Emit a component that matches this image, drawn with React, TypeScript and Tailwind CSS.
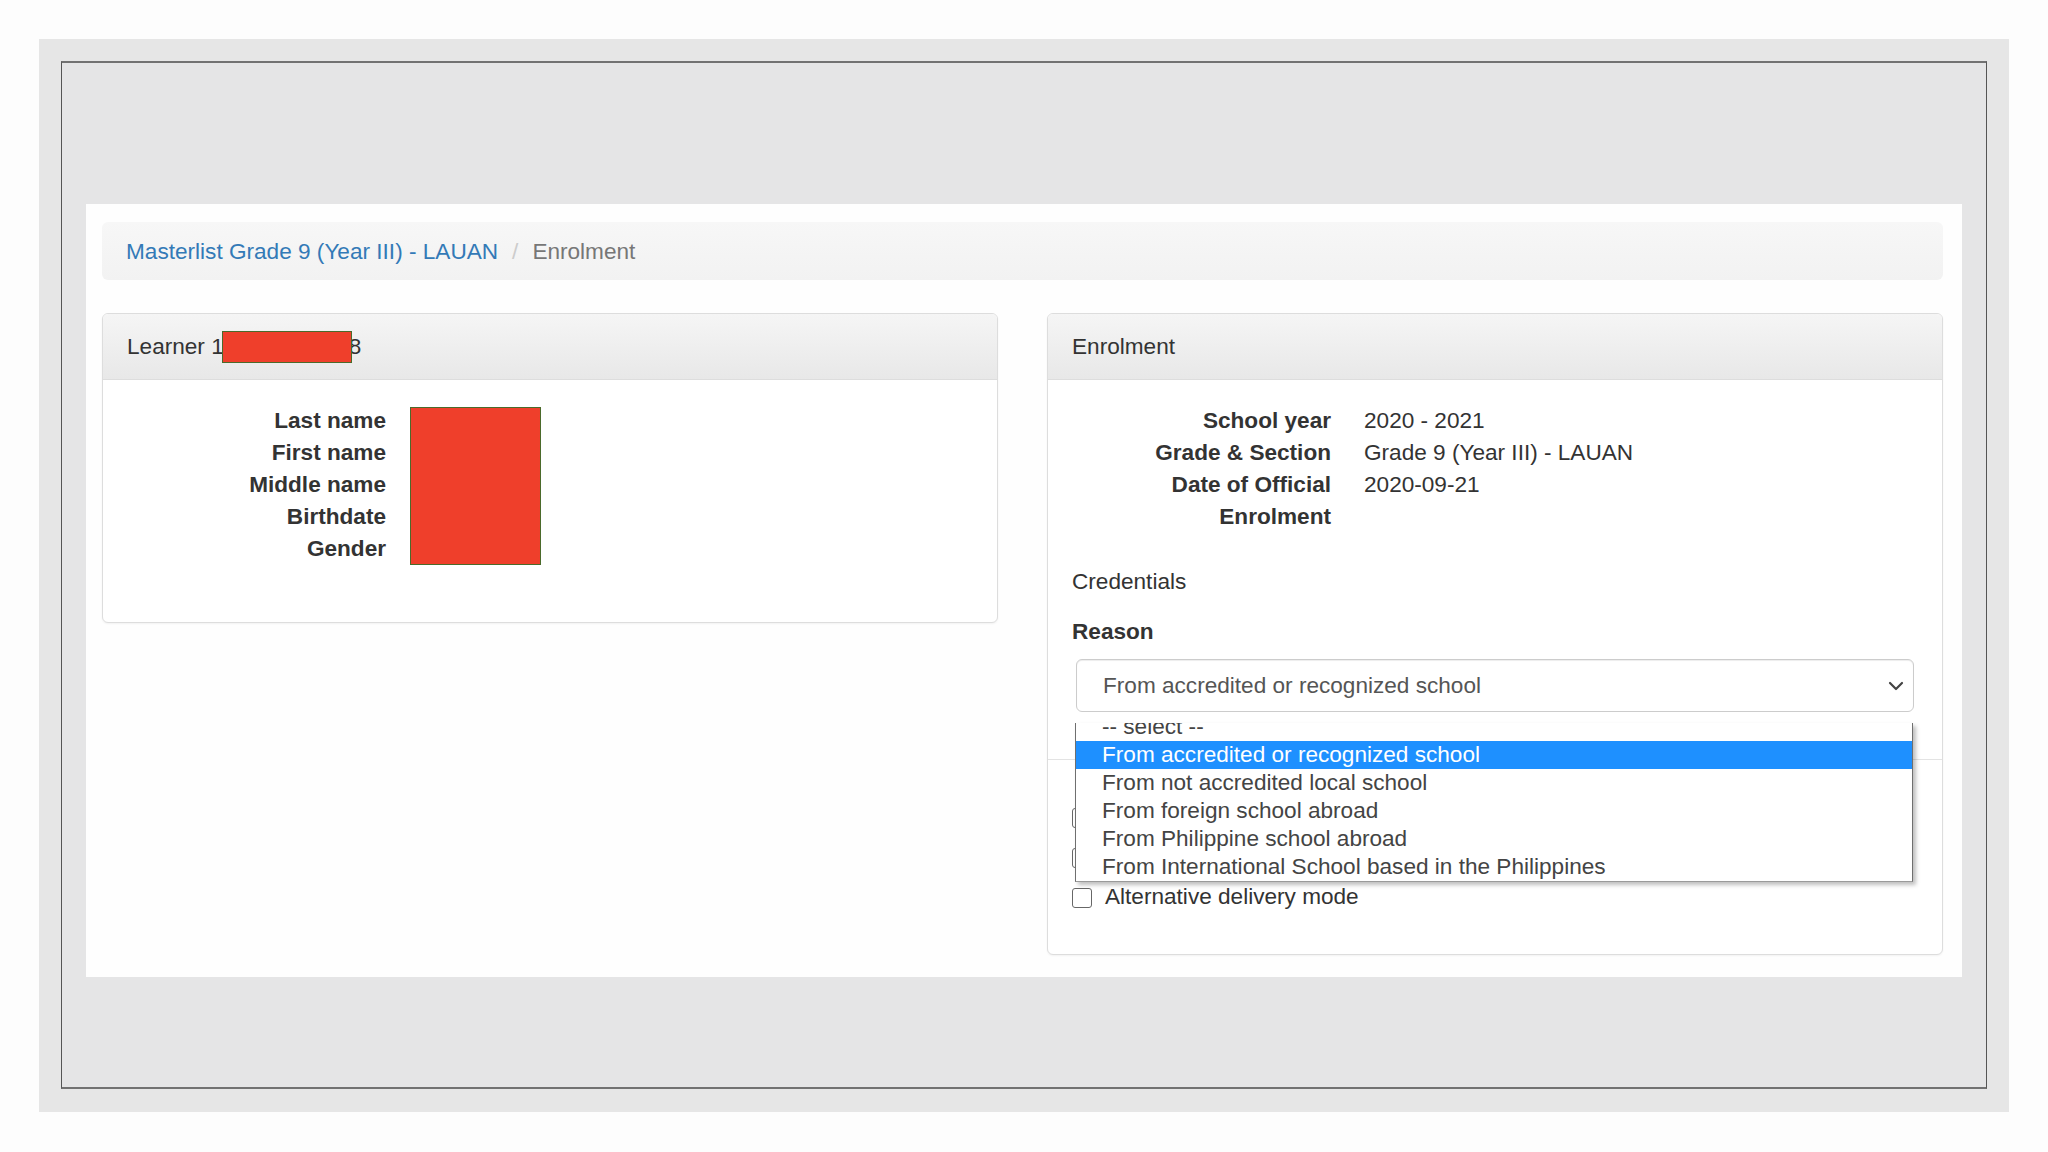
import React from "react";

function Chevron() {
  return (
    <svg width="16" height="10" viewBox="0 0 16 10" className="shrink-0">
      <path d="M2 2 L8 8 L14 2" fill="none" stroke="#444" strokeWidth="2.2" strokeLinecap="round" strokeLinejoin="round" />
    </svg>
  );
}

function Checkbox() {
  return <span className="mt-[9px] inline-block h-[20px] w-[20px] shrink-0 rounded-[3px] border-[1.5px] border-[#676767] bg-white" />;
}

const options = [
  "-- select --",
  "From accredited or recognized school",
  "From not accredited local school",
  "From foreign school abroad",
  "From Philippine school abroad",
  "From International School based in the Philippines",
];

export default function App() {
  return (
    <div className="min-h-[1152px] w-[2048px] bg-[#fdfdfd] pl-[39px] pt-[39px] font-['Liberation_Sans',Arial,sans-serif] text-[22.6px] leading-[32px] text-[#333]">
      <div className="h-[1073px] w-[1970px] bg-[#e6e6e6] p-[22px]">
        <div className="h-[1028px] border-x border-y-2 border-x-[#555] border-y-[#727272] bg-[#e5e5e6] px-[24px] pt-[141px]">
          <div className="h-[773px] bg-[#fefefe] pl-[16px] pr-[19px] pt-[18px]">
            {/* Breadcrumb */}
            <div className="mb-[33px] flex h-[58px] items-center rounded-[6px] bg-gradient-to-b from-[#f7f7f7] to-[#f2f2f2] px-[24px] pt-[2px]">
              <span className="text-[#337ab7]">Masterlist Grade 9 (Year III) - LAUAN</span>
              <span className="mx-[14px] text-[#ccc]">/</span>
              <span className="text-[#777]">Enrolment</span>
            </div>

            <div className="grid grid-cols-2 items-start gap-x-[49px]">
              {/* Learner panel */}
              <div className="rounded-[6px] border border-[#ddd] bg-white shadow-[0_1px_2px_rgba(0,0,0,0.05)]">
                <div className="flex items-center rounded-t-[5px] border-b border-[#ddd] bg-gradient-to-b from-[#f5f5f5] to-[#e8e8e8] px-[24px] pb-[16px] pt-[17px]">
                  <span>Learner 1</span>
                  <span className="relative z-10 -ml-[2px] inline-block h-[32px] w-[130px] border border-[#4b6a2b] bg-[#ef3f2b]" />
                  <span className="-ml-[3px]">8</span>
                </div>
                <div className="flex px-[24px] pb-[57px] pt-[25px]">
                  <div className="w-[259px] text-right font-bold">
                    <div>Last name</div>
                    <div>First name</div>
                    <div>Middle name</div>
                    <div>Birthdate</div>
                    <div>Gender</div>
                  </div>
                  <div className="ml-[24px] mt-[2px] h-[158px] w-[131px] border border-[#4b6a2b] bg-[#ef3f2b]" />
                </div>
              </div>

              {/* Enrolment panel */}
              <div className="rounded-[6px] border border-[#ddd] bg-white shadow-[0_1px_2px_rgba(0,0,0,0.05)]">
                <div className="rounded-t-[5px] border-b border-[#ddd] bg-gradient-to-b from-[#f5f5f5] to-[#e8e8e8] px-[24px] pb-[16px] pt-[17px]">
                  Enrolment
                </div>
                <div className="border-b border-[#e3e3e3] px-[24px] pb-[47px] pt-[25px]">
                  <div className="mb-[33px]">
                    <div className="flex">
                      <div className="w-[259px] shrink-0 text-right font-bold">School year</div>
                      <div className="ml-[33px]">2020 - 2021</div>
                    </div>
                    <div className="flex">
                      <div className="w-[259px] shrink-0 text-right font-bold">Grade &amp; Section</div>
                      <div className="ml-[33px]">Grade 9 (Year III) - LAUAN</div>
                    </div>
                    <div className="flex">
                      <div className="w-[259px] shrink-0 text-right font-bold">Date of Official Enrolment</div>
                      <div className="ml-[33px]">2020-09-21</div>
                    </div>
                  </div>
                  <div className="mb-[18px]">Credentials</div>
                  <div className="mb-[11px] font-bold">Reason</div>
                  <div className="relative mx-[4px]">
                    <div className="flex h-[53px] items-center justify-between rounded-[6px] border border-[#ccc] bg-white pl-[26px] pr-[9px] text-[#555] shadow-[inset_0_1px_1px_rgba(0,0,0,0.075)]">
                      <span>From accredited or recognized school</span>
                      <Chevron />
                    </div>
                    <div className="absolute left-[-1px] right-[1px] top-[64px] z-20 overflow-hidden border-x border-b border-x-[#6f6f6f] border-b-[#9a9a9a] bg-white shadow-[3px_3px_4px_rgba(0,0,0,0.25)]">
                      <div className="-mt-[10px]">
                        {options.map((o, i) => (
                          <div
                            key={o}
                            className={
                              i === 1
                                ? "h-[28px] whitespace-nowrap bg-[#1e90ff] pl-[26px] leading-[28px] text-white"
                                : "h-[28px] whitespace-nowrap pl-[26px] leading-[28px] text-[#444]"
                            }
                          >
                            {o}
                          </div>
                        ))}
                      </div>
                    </div>
                  </div>
                </div>
                <div className="px-[24px] pb-[43px] pt-[39px]">
                  <div className="flex h-[32px] items-start">
                    <Checkbox />
                  </div>
                  <div className="mt-[8px] flex h-[32px] items-start">
                    <Checkbox />
                  </div>
                  <div className="mt-[8px] flex h-[32px] items-start">
                    <Checkbox />
                    <span className="ml-[13px] mt-[2px]">Alternative delivery mode</span>
                  </div>
                </div>
              </div>
            </div>
          </div>
        </div>
      </div>
    </div>
  );
}
